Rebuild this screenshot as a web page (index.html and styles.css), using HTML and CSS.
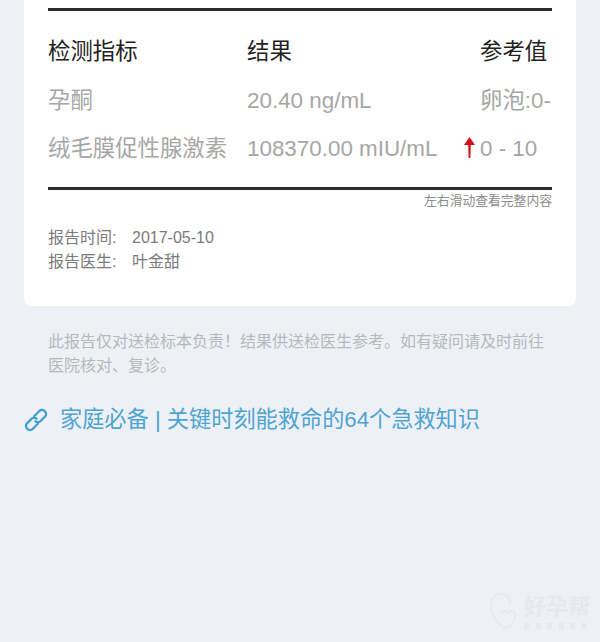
FILE: index.html
```html
<!DOCTYPE html>
<html lang="zh">
<head>
<meta charset="utf-8">
<title>检测报告</title>
<link rel="stylesheet" href="styles.css">
</head>
<body>
<main class="page">
  <section class="card">
    <div class="table">
      <div class="row head">
        <div class="c1">检测指标</div>
        <div class="c2">结果</div>
        <div class="c3">参考值</div>
      </div>
      <div class="row">
        <div class="c1">孕酮</div>
        <div class="c2">20.40 ng/mL</div>
        <div class="c3">卵泡:0-</div>
      </div>
      <div class="row">
        <div class="c1">绒毛膜促性腺激素</div>
        <div class="c2">108370.00 mIU/mL
          <svg class="arrow" width="11" height="21" viewBox="0 0 11 21"><path d="M5.5 0 L11 8 L6.8 8 L6.4 21 L4.6 21 L4.2 8 L0 8 Z" fill="#d0121b"/></svg>
        </div>
        <div class="c3">0 - 10</div>
      </div>
    </div>
    <div class="hint">左右滑动查看完整内容</div>
    <dl class="meta">
      <div class="meta-row"><dt>报告时间:</dt><dd>2017-05-10</dd></div>
      <div class="meta-row"><dt>报告医生:</dt><dd>叶金甜</dd></div>
    </dl>
  </section>
  <p class="note">此报告仅对送检标本负责！结果供送检医生参考。如有疑问请及时前往医院核对、复诊。</p>
  <a class="link" href="#">
    <svg class="link-icon" width="24" height="24" viewBox="0 0 24 24" fill="none" stroke="#3f9bd0" stroke-width="2.2" stroke-linecap="round" stroke-linejoin="round">
      <path d="M10.2 8.2 L15.4 3 a3.6 3.6 0 0 1 5.1 0 l.5 .5 a3.6 3.6 0 0 1 0 5.1 L16.4 13.2 a3.6 3.6 0 0 1-5.1 0"/>
      <path d="M13.8 15.8 L8.6 21 a3.6 3.6 0 0 1-5.1 0 l-.5-.5 a3.6 3.6 0 0 1 0-5.1 L7.6 10.8 a3.6 3.6 0 0 1 5.1 0"/>
    </svg>
    <span>家庭必备 | 关键时刻能救命的64个急救知识</span>
  </a>
  <div class="mark">
    <svg width="30" height="38" viewBox="0 0 30 38" fill="none" stroke="#e5e8ec" stroke-width="1.5">
      <path d="M14 2 C6 2 2 8 3 15 C4 24 10 32 16 36 C24 35 28 28 27 22 C26 18 22 18 20 21 C18 18 14 18 12 22 M14 2 C20 2 23 7 22 13"/>
    </svg>
    <div class="mark-text">
      <div class="mark-name">好孕帮</div>
      <div class="mark-dots"></div>
    </div>
  </div>
</main>
</body>
</html>
```

FILE: styles.css
```css
* { box-sizing: border-box; }
html, body { margin: 0; padding: 0; }
body {
  background: #edf1f5;
  font-family: "Liberation Sans", "Noto Sans CJK SC", sans-serif;
}
.page {
  position: relative;
  height: 642px;
  overflow: hidden;
}
.card {
  margin: 0 24px;
  padding: 8px 24px 32px;
  height: 306px;
  background: #fff;
  border-radius: 0 0 8px 8px;
}
.table {
  border-top: 3px solid #2b2b2b;
  border-bottom: 3px solid #2b2b2b;
  padding: 16px 0;
  overflow: hidden;
}
.row {
  display: flex;
  height: 48px;
  align-items: center;
  font-size: 22.4px;
  line-height: 32px;
  color: #a6a6a6;
  white-space: nowrap;
}
.head { color: #222; }
.c1 {
  width: 199px;
  flex: none;
  font-family: "Noto Sans CJK SC", sans-serif;
  padding-bottom: 3px;
}
.c2 {
  width: 233px;
  flex: none;
  display: flex;
  align-items: center;
  justify-content: space-between;
  padding-right: 5px;
  padding-top: 3px;
}
.c3 { flex: none; padding-top: 3px; }
.head .c1, .head .c2, .head .c3 {
  font-family: "Noto Sans CJK SC", sans-serif;
  padding-top: 0;
  padding-bottom: 4px;
}
.arrow { flex: none; margin-top: -3px; }
.hint {
  margin-top: 2px;
  text-align: right;
  font-size: 12.8px;
  line-height: 18px;
  color: #8c8c8c;
}
.meta {
  margin: 16px 0 0;
  font-size: 16px;
  line-height: 24px;
  color: #7b7b7b;
}
.meta-row { display: flex; }
.meta dt { width: 84px; }
.meta dd { margin: 0; }
.note {
  margin: 24px 48px 0;
  font-size: 16px;
  line-height: 24px;
  color: #b5b8bc;
}
.link {
  display: flex;
  align-items: center;
  gap: 12px;
  margin: 26px 0 0 24px;
  font-size: 22.2px;
  line-height: 32px;
  color: #4fa3d3;
  text-decoration: none;
}
.link-icon { flex: none; }
.mark {
  position: absolute;
  right: 10px;
  bottom: 12px;
  display: flex;
  gap: 6px;
  align-items: center;
  color: #e5e8ec;
}
.mark-name {
  font-size: 22px;
  line-height: 26px;
  font-weight: 700;
}
.mark-dots {
  width: 62px;
  height: 6px;
  margin-top: 3px;
  background: repeating-linear-gradient(90deg, #e5e8ec 0 5px, transparent 5px 11.6px);
}
```
